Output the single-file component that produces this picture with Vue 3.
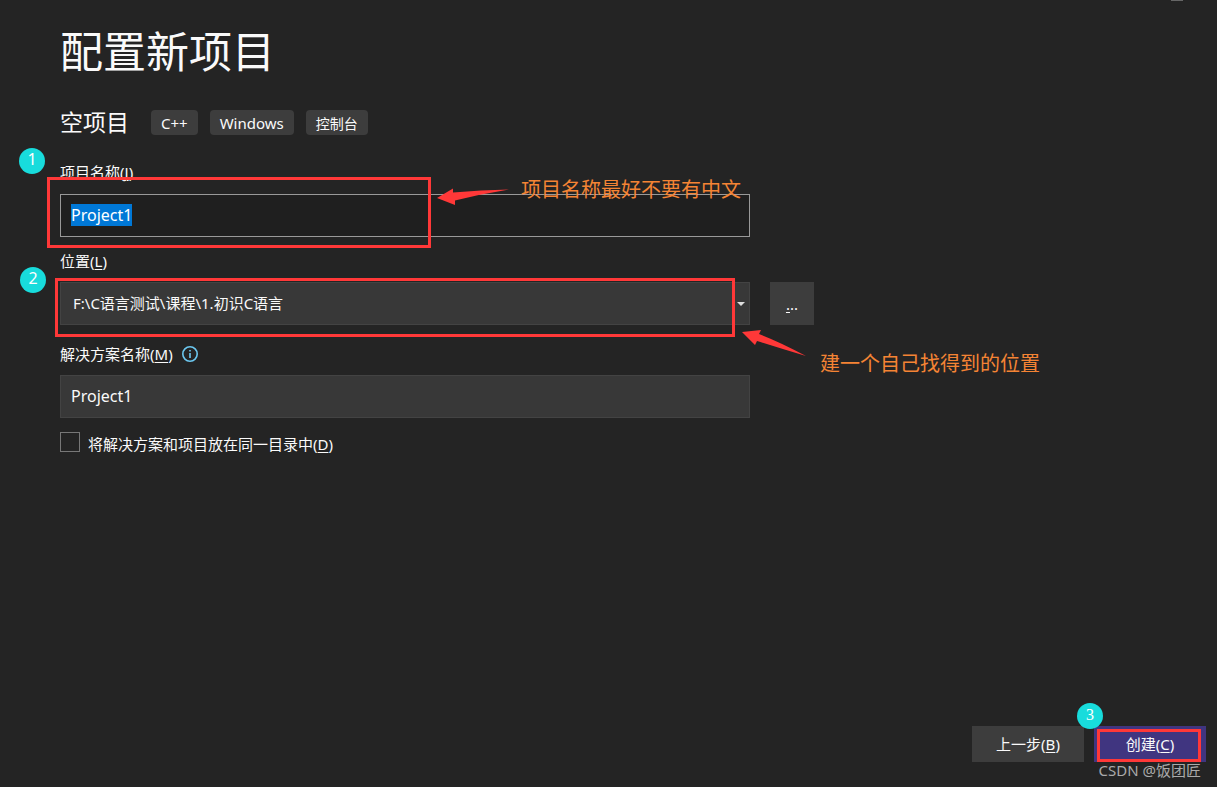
<script setup>
import { onMounted, ref } from 'vue'

const projectName = ref('Project1')
const solutionName = ref('Project1')
const location = ref('F:\\C语言测试\\课程\\1.初识C语言')
const sameDirectory = ref(false)
const tags = [
  { text: 'C++', latin: true },
  { text: 'Windows', latin: true },
  { text: '控制台', latin: false },
]
const nameInput = ref(null)

onMounted(() => {
  nameInput.value.focus()
  nameInput.value.select()
})
</script>

<template>
  <main class="page">
    <span class="window-mark"></span>
    <h1>配置新项目</h1>
    <div class="template-row">
      <h2>空项目</h2>
      <ul class="tags">
        <li v-for="tag in tags" :key="tag.text" :class="{ latin: tag.latin }">{{ tag.text }}</li>
      </ul>
    </div>

    <form id="project-form" class="form" @submit.prevent>
      <div class="field name-field">
        <label for="project-name">项目名称(<u>J</u>)</label>
        <input id="project-name" ref="nameInput" v-model="projectName" class="box" type="text" spellcheck="false" />
        <span class="frame frame-name"></span>
        <span class="badge badge-one">1</span>
        <svg class="arrow arrow-name" viewBox="0 0 72 17" width="72" height="17" aria-hidden="true">
          <path d="M0 10 16 0.500 16 4.500Q44 2 72 1.500Q44 6 18 12.500V17Z" />
        </svg>
        <span class="note note-name">项目名称最好不要有中文</span>
      </div>

      <div class="field location-field">
        <label for="location">位置(<u>L</u>)</label>
        <div class="location-row">
          <select id="location" v-model="location" class="box">
            <option :value="location">{{ location }}</option>
          </select>
          <svg class="caret" viewBox="0 0 8 4" width="8" height="4" aria-hidden="true"><path d="M0 0H8L4 4Z" /></svg>
          <button class="browse" type="button" aria-label="浏览"><u>.</u>..</button>
        </div>
        <span class="frame frame-location"></span>
        <span class="badge badge-two">2</span>
        <svg class="arrow arrow-location" viewBox="0 0 64 26" width="64" height="26" aria-hidden="true">
          <path d="M0 2 19 0 17 4Q38 12 64 26Q40 19 15 11L13 15Z" />
        </svg>
        <span class="note note-location">建一个自己找得到的位置</span>
      </div>

      <div class="field solution-field">
        <div class="label-row">
          <label for="solution-name">解决方案名称(<u>M</u>)</label>
          <svg class="info" viewBox="0 0 16 16" width="16" height="16" aria-hidden="true">
            <circle cx="8" cy="8" r="7.200" />
            <path d="M8 7V12M8 4V5.600" />
          </svg>
        </div>
        <input id="solution-name" v-model="solutionName" class="box" type="text" spellcheck="false" />
      </div>

      <label class="check">
        <input v-model="sameDirectory" type="checkbox" />
        <span>将解决方案和项目放在同一目录中(<u>D</u>)</span>
      </label>
    </form>

    <footer class="actions">
      <button type="button">上一步(<u>B</u>)</button>
      <div class="create">
        <button class="primary" type="submit" form="project-form">创建(<u>C</u>)</button>
        <span class="frame frame-create"></span>
        <span class="badge badge-three">3</span>
        <span class="watermark">CSDN @饭团匠</span>
      </div>
    </footer>
  </main>
</template>

<style>
body {
  background: #242424;
}
</style>

<style scoped>
.page {
  box-sizing: border-box;
  position: relative;
  display: flex;
  flex-direction: column;
  min-height: 100vh;
  padding: 20px 11px 25px 60px;
  overflow: hidden;
  background: #242424;
  color: #fafafa;
  font-family: "Noto Sans", "Noto Sans CJK SC", sans-serif;
  font-size: 15px;
  line-height: 20px;
}

button,
input,
select {
  font: inherit;
  color: inherit;
}

u {
  text-underline-offset: 2px;
}

.window-mark {
  position: absolute;
  top: 0;
  right: 34px;
  width: 12px;
  height: 1px;
  background: #666;
}

h1,
h2 {
  margin: 0;
  font-weight: 400;
}

h1 {
  font-size: 43px;
  line-height: 64px;
}

.template-row {
  display: flex;
  align-items: center;
  gap: 22px;
  margin-top: 26px;
}

h2 {
  font-size: 23px;
  line-height: 25px;
}

.tags {
  display: flex;
  gap: 12px;
  margin: 0;
  padding: 0;
  list-style: none;
}

.tags li {
  padding: 2px 10px 0;
  border-radius: 4px;
  background: #3d3d3d;
  font-size: 14px;
  line-height: 23px;
}

.tags .latin {
  font-size: 15px;
}

.form {
  max-width: 690px;
  margin-top: 27px;
}

.field {
  position: relative;
  display: flex;
  flex-direction: column;
}

.name-field {
  gap: 12px;
}

.location-field {
  gap: 11px;
  margin-top: 14px;
}

.solution-field {
  gap: 11px;
  margin-top: 19px;
}

.box {
  box-sizing: border-box;
  width: 100%;
  height: 43px;
  margin: 0;
  padding: 0 10px 2px;
  border: 1px solid #434343;
  border-radius: 0;
  outline: 0;
  appearance: none;
  background: #383838;
}

input.box {
  font-size: 16px;
}

#project-name {
  border-color: #999;
  background: #1f1f1f;
}

#project-name::selection {
  background: #0078d7;
  color: #fff;
}

#location {
  padding-left: 12px;
}

.location-row {
  position: relative;
}

.caret {
  position: absolute;
  top: 20px;
  right: 5px;
  fill: #ddd;
  pointer-events: none;
}

.browse {
  position: absolute;
  top: 0;
  left: calc(100% + 20px);
  width: 44px;
  height: 43px;
  padding: 0;
  border: 0;
  background: #3d3d3d;
}

.label-row {
  display: flex;
  align-items: center;
  gap: 9px;
}

.info {
  fill: none;
  stroke: #6cc8f0;
  stroke-width: 1.6;
}

.check {
  display: flex;
  align-items: flex-start;
  gap: 8px;
  width: fit-content;
  margin-top: 14px;
  line-height: 24px;
}

.check input {
  box-sizing: border-box;
  width: 20px;
  height: 20px;
  margin: 0;
  border: 1px solid #777;
  appearance: none;
}

.check input:checked {
  background: #6cc8f0;
}

.actions {
  display: flex;
  justify-content: flex-end;
  gap: 10px;
  margin-top: auto;
}

.actions button {
  display: block;
  width: 112px;
  height: 36px;
  padding: 0;
  border: 0;
  background: #3d3d3d;
}

.actions .primary {
  background: #403580;
}

.create {
  position: relative;
}

.frame {
  position: absolute;
  box-sizing: border-box;
  border: 3px solid #ff3838;
  pointer-events: none;
}

.frame-name {
  top: 15px;
  left: -13px;
  width: 384px;
  height: 71px;
}

.frame-location {
  top: 27px;
  left: -5px;
  right: 15px;
  height: 59px;
}

.frame-create {
  top: 3px;
  left: 3px;
  right: 5px;
  bottom: 0;
}

.badge {
  position: absolute;
  width: 26px;
  height: 26px;
  border-radius: 50%;
  background: #18dcdc;
  color: #fff;
  font-size: 16px;
  line-height: 23px;
  text-align: center;
}

.badge-one {
  top: -14px;
  left: -41px;
}

.badge-two {
  top: 16px;
  left: -40px;
}

.badge-three {
  top: -23px;
  left: -17px;
  font-family: "Liberation Serif", serif;
}

.arrow {
  position: absolute;
  fill: #ff3838;
}

.arrow-name {
  top: 26px;
  left: 377px;
}

.arrow-location {
  top: 79px;
  left: 682px;
}

.note {
  position: absolute;
  color: #f58434;
  font-size: 20px;
  line-height: 28px;
  white-space: nowrap;
}

.note-name {
  top: 14px;
  left: 461px;
}

.note-location {
  top: 99px;
  left: 760px;
}

.watermark {
  position: absolute;
  top: 34px;
  right: 5px;
  color: #aaa;
  font-size: 15px;
  white-space: nowrap;
}
</style>
